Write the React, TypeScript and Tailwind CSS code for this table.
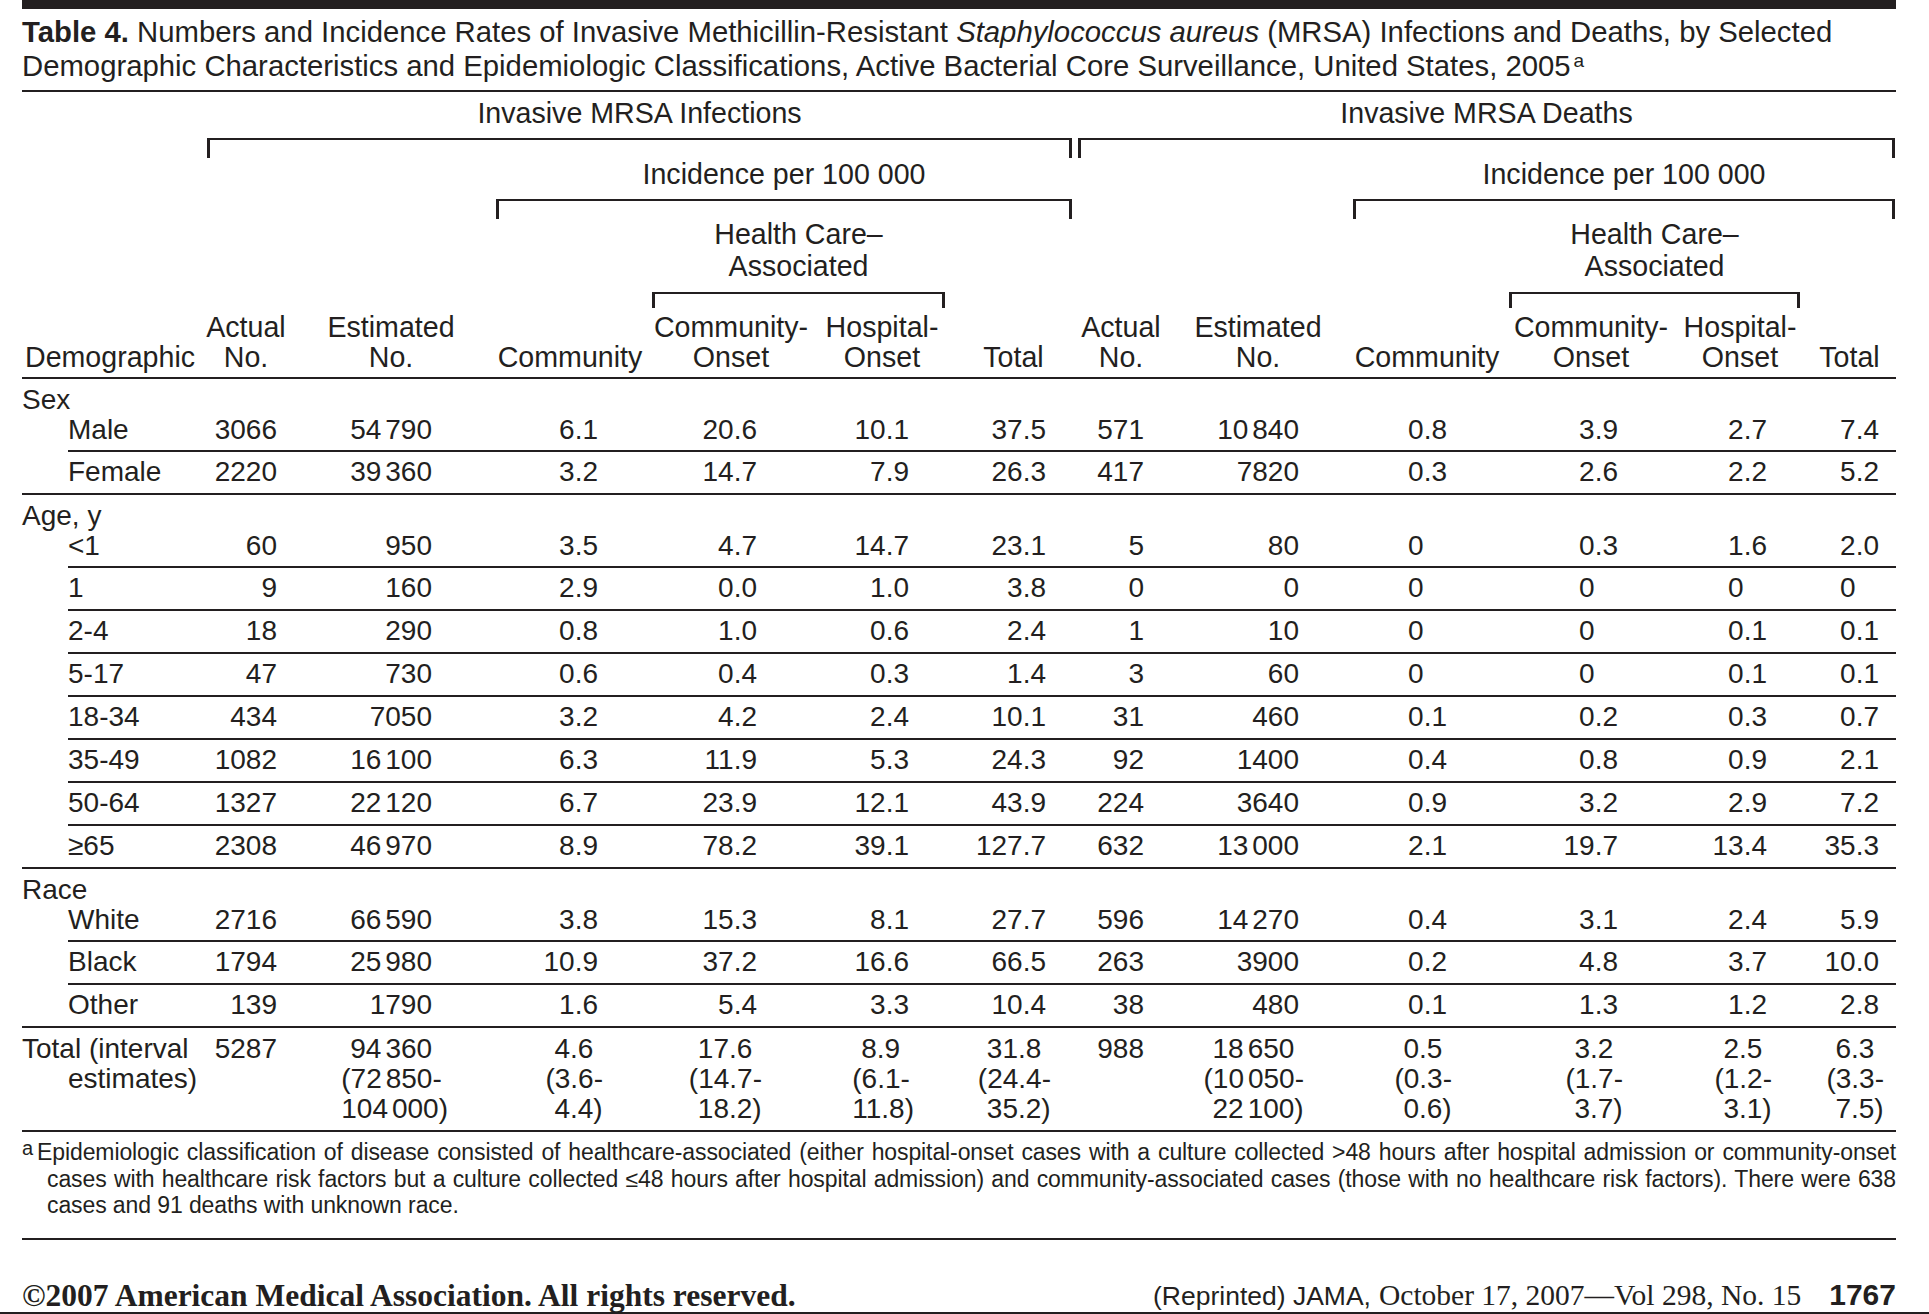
import React from 'react';

// column widths line up with the bracket spans in the header
const GRID =
  'grid grid-cols-[178px_92px_198px_160px_162px_140px_123px_92px_182px_156px_172px_126px_93px]';

const PAD = [
  'pr-[15px]',
  'pr-[58px]',
  'pr-[52px]',
  'pr-[55px]',
  'pr-[43px]',
  'pr-[29px]',
  'pr-[23px]',
  'pr-[50px]',
  'pr-[58px]',
  'pr-[59px]',
  'pr-[36px]',
  'pr-[17px]'
];

const DECIMAL = [false, false, true, true, true, true, false, false, true, true, true, true];

type Row = { label: string; values: string[] };
type Group = { title: string; rows: Row[] };

const GROUPS: Group[] = [
  {
    title: 'Sex',
    rows: [
      { label: 'Male', values: ['3066', '54 790', '6.1', '20.6', '10.1', '37.5', '571', '10 840', '0.8', '3.9', '2.7', '7.4'] },
      { label: 'Female', values: ['2220', '39 360', '3.2', '14.7', '7.9', '26.3', '417', '7820', '0.3', '2.6', '2.2', '5.2'] }
    ]
  },
  {
    title: 'Age, y',
    rows: [
      { label: '<1', values: ['60', '950', '3.5', '4.7', '14.7', '23.1', '5', '80', '0', '0.3', '1.6', '2.0'] },
      { label: '1', values: ['9', '160', '2.9', '0.0', '1.0', '3.8', '0', '0', '0', '0', '0', '0'] },
      { label: '2-4', values: ['18', '290', '0.8', '1.0', '0.6', '2.4', '1', '10', '0', '0', '0.1', '0.1'] },
      { label: '5-17', values: ['47', '730', '0.6', '0.4', '0.3', '1.4', '3', '60', '0', '0', '0.1', '0.1'] },
      { label: '18-34', values: ['434', '7050', '3.2', '4.2', '2.4', '10.1', '31', '460', '0.1', '0.2', '0.3', '0.7'] },
      { label: '35-49', values: ['1082', '16 100', '6.3', '11.9', '5.3', '24.3', '92', '1400', '0.4', '0.8', '0.9', '2.1'] },
      { label: '50-64', values: ['1327', '22 120', '6.7', '23.9', '12.1', '43.9', '224', '3640', '0.9', '3.2', '2.9', '7.2'] },
      { label: '≥65', values: ['2308', '46 970', '8.9', '78.2', '39.1', '127.7', '632', '13 000', '2.1', '19.7', '13.4', '35.3'] }
    ]
  },
  {
    title: 'Race',
    rows: [
      { label: 'White', values: ['2716', '66 590', '3.8', '15.3', '8.1', '27.7', '596', '14 270', '0.4', '3.1', '2.4', '5.9'] },
      { label: 'Black', values: ['1794', '25 980', '10.9', '37.2', '16.6', '66.5', '263', '3900', '0.2', '4.8', '3.7', '10.0'] },
      { label: 'Other', values: ['139', '1790', '1.6', '5.4', '3.3', '10.4', '38', '480', '0.1', '1.3', '1.2', '2.8'] }
    ]
  }
];

const TOTAL: string[][] = [
  ['5287'],
  ['94 360', '(72 850-', '104 000)'],
  ['4.6', '(3.6-', '4.4)'],
  ['17.6', '(14.7-', '18.2)'],
  ['8.9', '(6.1-', '11.8)'],
  ['31.8', '(24.4-', '35.2)'],
  ['988'],
  ['18 650', '(10 050-', '22 100)'],
  ['0.5', '(0.3-', '0.6)'],
  ['3.2', '(1.7-', '3.7)'],
  ['2.5', '(1.2-', '3.1)'],
  ['6.3', '(3.3-', '7.5)']
];

// numbers use a thin gap as thousands separator
function Num({ value }: { value: string }) {
  const parts = value.split(' ');
  return (
    <>
      {parts.map((p, i) => (
        <span key={i} className={i > 0 ? 'ml-[4px]' : ''}>
          {p}
        </span>
      ))}
    </>
  );
}

function Cell({ value, col }: { value: string; col: number }) {
  return (
    <div className={`text-right whitespace-nowrap ${PAD[col]}`}>
      <Num value={value} />
      {value === '0' && DECIMAL[col] && <span className="invisible">.0</span>}
    </div>
  );
}

function Rule({ indent }: { indent?: boolean }) {
  return <div className={`h-[2px] bg-[#231f20] ${indent ? 'ml-[46px]' : ''}`} />;
}

function DataRow({ row, first }: { row: Row; first: boolean }) {
  return (
    <div className={`${GRID} leading-[30px] ${first ? 'pb-[5px]' : 'pt-[5px] pb-[6px]'}`}>
      <div className="pl-[46px] whitespace-nowrap">{row.label}</div>
      {row.values.map((v, i) => (
        <Cell key={i} value={v} col={i} />
      ))}
    </div>
  );
}

function GroupBlock({ group }: { group: Group }) {
  return (
    <>
      <div className="pt-[6px] leading-[30px]">{group.title}</div>
      {group.rows.map((r, i) => (
        <React.Fragment key={r.label}>
          <DataRow row={r} first={i === 0} />
          <Rule indent={i < group.rows.length - 1} />
        </React.Fragment>
      ))}
    </>
  );
}

function TotalCell({ lines, col }: { lines: string[]; col: number }) {
  if (lines.length === 1) return <Cell value={lines[0]} col={col} />;
  const max = Math.max(...lines.map((l) => l.length));
  return (
    <div className={`text-right ${PAD[col]}`}>
      <div className={`inline-block text-left whitespace-nowrap ${col === 1 ? '-mr-[16px]' : '-mr-[5px]'}`}>
        {lines.map((l, i) => (
          <div key={i} className={!l.startsWith('(') && l.length < max ? 'pl-[9px]' : ''}>
            <Num value={l} />
          </div>
        ))}
      </div>
    </div>
  );
}

function Bracket({ className }: { className: string }) {
  return <div className={`border-t-2 border-x-[3px] border-[#231f20] ${className}`} />;
}

function ColHead({ col, lines }: { col: string; lines: string[] }) {
  return (
    <div className={`${col} row-start-4 flex flex-col justify-end pb-[5px] text-center whitespace-nowrap`}>
      {lines.map((l) => (
        <div key={l}>{l}</div>
      ))}
    </div>
  );
}

function Header() {
  return (
    <div className={`${GRID} grid-rows-[66px_61px_89px_69px] leading-[30px] text-[28.6px]`}>
      <div className="col-start-2 col-span-6 row-start-1 ml-[7px] mr-[3px] pt-[6px]">
        <div className="text-center">Invasive MRSA Infections</div>
        <Bracket className="mt-[10px] h-[20px]" />
      </div>
      <div className="col-start-8 col-span-6 row-start-1 ml-[3px] mr-[1px] pt-[6px]">
        <div className="text-center">Invasive MRSA Deaths</div>
        <Bracket className="mt-[10px] h-[20px]" />
      </div>

      <div className="col-start-4 col-span-4 row-start-2 ml-[6px] mr-[3px] pt-[1px]">
        <div className="text-center">Incidence per 100 000</div>
        <Bracket className="mt-[10px] h-[20px]" />
      </div>
      <div className="col-start-10 col-span-4 row-start-2 ml-[4px] mr-[1px] pt-[1px]">
        <div className="text-center">Incidence per 100 000</div>
        <Bracket className="mt-[10px] h-[20px]" />
      </div>

      <div className="col-start-5 col-span-2 row-start-3 ml-[2px] mr-[7px]">
        <div className="text-center">Health Care–</div>
        <div className="text-center mt-[2px]">Associated</div>
        <Bracket className="mt-[11px] h-[16px]" />
      </div>
      <div className="col-start-11 col-span-2 row-start-3 ml-[4px] mr-[3px]">
        <div className="text-center">Health Care–</div>
        <div className="text-center mt-[2px]">Associated</div>
        <Bracket className="mt-[11px] h-[16px]" />
      </div>

      <div className="col-start-1 row-start-4 flex flex-col justify-end pb-[5px] pl-[3px]">Demographic</div>
      <ColHead col="col-start-2" lines={['Actual', 'No.']} />
      <ColHead col="col-start-3" lines={['Estimated', 'No.']} />
      <ColHead col="col-start-4" lines={['Community']} />
      <ColHead col="col-start-5" lines={['Community-', 'Onset']} />
      <ColHead col="col-start-6" lines={['Hospital-', 'Onset']} />
      <ColHead col="col-start-7" lines={['Total']} />
      <ColHead col="col-start-8" lines={['Actual', 'No.']} />
      <ColHead col="col-start-9" lines={['Estimated', 'No.']} />
      <ColHead col="col-start-10" lines={['Community']} />
      <ColHead col="col-start-11" lines={['Community-', 'Onset']} />
      <ColHead col="col-start-12" lines={['Hospital-', 'Onset']} />
      <ColHead col="col-start-13" lines={['Total']} />
    </div>
  );
}

export default function App() {
  return (
    <div className="w-[1929px] h-[1314px] overflow-hidden bg-white flex flex-col text-[#231f20] font-['Liberation_Sans',Arial,sans-serif] text-[28px]">
      <div className="flex-1 pl-[22px] pr-[33px]">
        {/* Title */}
        <div className="h-[9px] bg-[#231f20]" />
        <div className="pt-[6px] pb-[7px] text-[29.3px] leading-[34px] whitespace-nowrap">
          <div>
            <span className="font-bold">Table 4.</span> Numbers and Incidence Rates of Invasive Methicillin-Resistant{' '}
            <span className="italic">Staphylococcus aureus</span> (MRSA) Infections and Deaths, by Selected
          </div>
          <div>
            Demographic Characteristics and Epidemiologic Classifications, Active Bacterial Core Surveillance, United
            States, 2005<sup className="text-[19px] ml-[3px]">a</sup>
          </div>
        </div>
        <Rule />

        <Header />
        <Rule />

        {/* Body */}
        {GROUPS.map((g) => (
          <GroupBlock key={g.title} group={g} />
        ))}

        <div className={`${GRID} pt-[6px] pb-[6px] leading-[30px]`}>
          <div className="whitespace-nowrap">
            <div>Total (interval</div>
            <div className="pl-[46px]">estimates)</div>
          </div>
          {TOTAL.map((lines, i) => (
            <TotalCell key={i} lines={lines} col={i} />
          ))}
        </div>
        <Rule />

        {/* Footnote */}
        <div className="h-[106px] pt-[7px] pl-[25px] text-[23px] tracking-[-0.1px] leading-[26.5px] whitespace-nowrap">
          <div className="flex -ml-[25px]">
            <span className="w-[15px] text-[20px] leading-[18px]">a</span>
            <span className="flex-1 [text-align-last:justify]">
              Epidemiologic classification of disease consisted of healthcare-associated (either hospital-onset cases
              with a culture collected &gt;48 hours after hospital admission or community-onset
            </span>
          </div>
          <div className="[text-align-last:justify]">
            cases with healthcare risk factors but a culture collected ≤48 hours after hospital admission) and
            community-associated cases (those with no healthcare risk factors). There were 638
          </div>
          <div>cases and 91 deaths with unknown race.</div>
        </div>
        <Rule />

        {/* Page footer */}
        <div className="h-[72px] flex items-end justify-between pb-[1px] leading-[30px] whitespace-nowrap">
          <div className="font-['Liberation_Serif',serif] font-bold text-[31.5px]">
            ©2007 American Medical Association. All rights reserved.
          </div>
          <div className="flex items-baseline">
            <span className="text-[26.5px]">(Reprinted) JAMA,</span>
            <span className="font-['Liberation_Serif',serif] text-[29.5px] ml-[8px]">
              October 17, 2007—Vol 298, No. 15
            </span>
            <span className="font-bold text-[30px] ml-[28px]">1767</span>
          </div>
        </div>
      </div>
      <div className="h-[2px] bg-[#231f20]" />
    </div>
  );
}
